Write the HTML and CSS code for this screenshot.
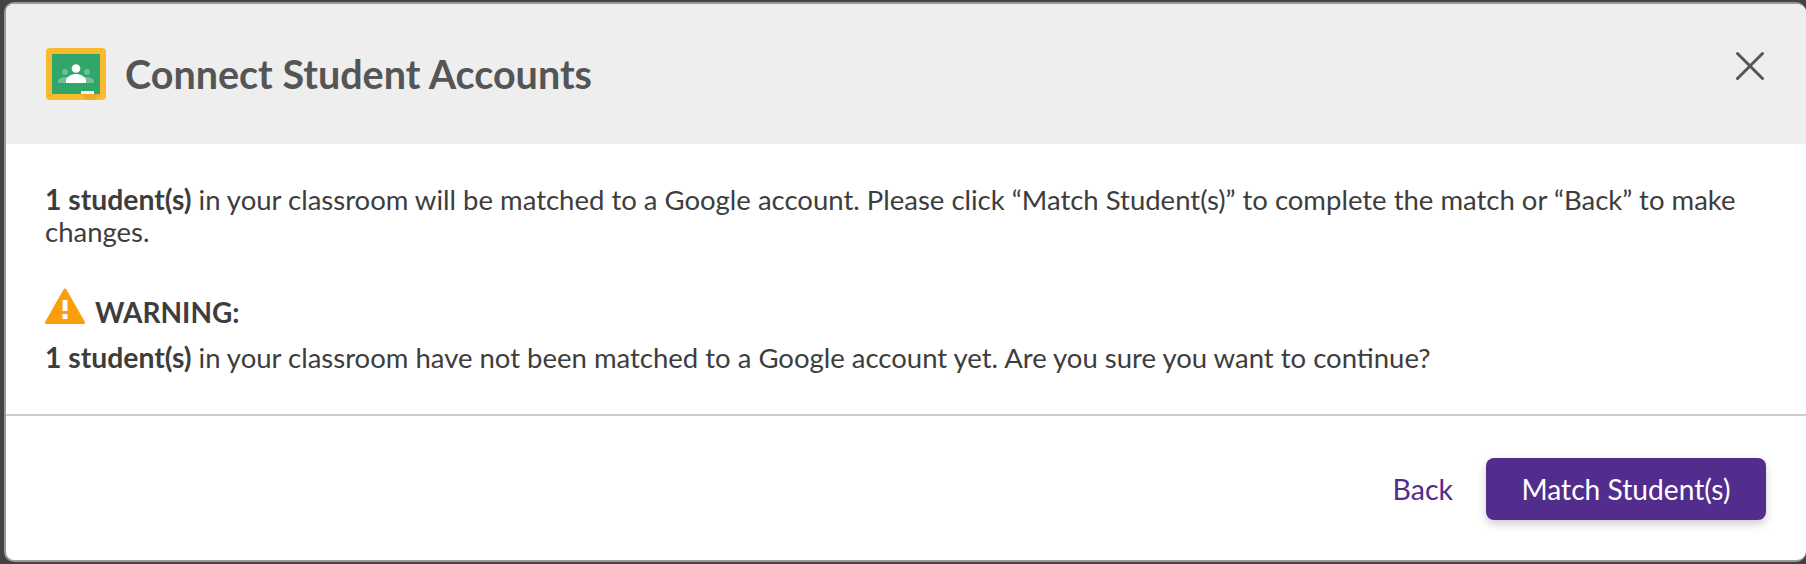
FILE: index.html
```
<!DOCTYPE html>
<html lang="en">
<head>
<meta charset="utf-8">
<title>Connect Student Accounts</title>
<link rel="stylesheet" href="styles.css">
</head>
<body>
<div class="modal">
  <header class="modal-header">
    <div class="title-group">
      <svg class="classroom-logo" width="60" height="52" viewBox="0 0 60 52">
        <rect width="60" height="52" rx="4" fill="#f8bb2e"/>
        <rect x="6" y="6" width="48" height="40" fill="#30a66a"/>
        <path d="M35 46h19v1l-6 5H41z" fill="#eeaa2c"/>
        <rect x="35" y="43" width="13" height="3" fill="#f3f3f3"/>
        <circle cx="19" cy="24" r="3" fill="#72bf95"/>
        <circle cx="41" cy="24" r="3" fill="#72bf95"/>
        <path d="M12 35v-1.500c0-2.500 4-4.500 7-4.500s7 2 7 6zM34 35c0-4 4-6 7-6s7 2 7 4.500V35z" fill="#72bf95"/>
        <circle cx="30" cy="20.500" r="4.300" fill="#fff"/>
        <path d="M20 35v-2.500c0-4 6-6.500 10-6.500s10 2.500 10 6.500V35z" fill="#fff"/>
      </svg>
      <h1 class="modal-title">Connect Student Accounts</h1>
    </div>
    <button class="close-btn" aria-label="Close">
      <svg width="30" height="30" viewBox="0 0 30 30"><path d="M2.500 2.500l25 25M27.500 2.500l-25 25" stroke="#555" stroke-width="3" stroke-linecap="round" fill="none"/></svg>
    </button>
  </header>
  <section class="modal-body">
    <p class="intro"><strong>1 student(s)</strong> in your classroom will be matched to a Google account. Please click “Match Student(s)” to complete the match or “Back” to make changes.</p>
    <div class="warning-head">
      <svg class="warning-icon" width="40" height="37" viewBox="0 0 40 37">
        <path d="M20 2L38.500 34.500H1.500z" fill="#fb9e0c" stroke="#fb9e0c" stroke-width="3" stroke-linejoin="round"/>
        <rect x="17.500" y="12" width="5" height="11" fill="#fff"/>
        <rect x="17.500" y="26" width="5" height="5" fill="#fff"/>
      </svg>
      <span class="warning-label">WARNING:</span>
    </div>
    <p class="warning-text"><strong>1 student(s)</strong> in your classroom have not been matched to a Google account yet. Are you sure you want to continue?</p>
  </section>
  <footer class="modal-footer">
    <a class="back-link" href="#">Back</a>
    <button class="match-btn">Match Student(s)</button>
  </footer>
</div>
</body>
</html>
```

FILE: styles.css
```
* { box-sizing: border-box; }
html, body { height: 100%; }
body {
  margin: 0;
  padding: 2px 0 2px 4px;
  background: #434343;
  font-family: Lato, sans-serif;
  color: #3d3d3d;
  overflow: hidden;
}
.modal {
  height: 560px;
  display: flex;
  flex-direction: column;
  background: #fff;
  border: 2px solid #999;
  border-right: 0;
  border-radius: 10px;
  overflow: hidden;
}
.modal-header {
  height: 140px;
  flex: none;
  display: flex;
  align-items: flex-start;
  justify-content: space-between;
  padding: 44px 41px 0 40px;
  background: #eee;
}
.title-group { display: flex; align-items: center; gap: 19px; }
.classroom-logo { display: block; }
.modal-title {
  margin: -1px 0 0;
  font-size: 39.5px;
  line-height: 44px;
  font-weight: 700;
  color: #555;
}
.close-btn {
  padding: 0;
  border: 0;
  background: none;
  display: flex;
  margin-top: 3px;
}
.modal-body {
  flex: 1;
  padding: 39px 40px 0 39px;
  border-bottom: 2px solid #ccc;
  font-size: 27.5px;
  line-height: 32px;
}
.modal-body p { margin: 0; }
.modal-body strong { font-weight: 700; font-size: 28.3px; }
.warning-head {
  margin-top: 40px;
  height: 37px;
  display: flex;
  align-items: flex-end;
  gap: 10px;
}
.warning-label {
  margin-bottom: -4px;
  font-size: 28px;
  line-height: 33px;
  font-weight: 700;
}
.warning-text { margin-top: 16px !important; }
.modal-footer {
  height: 144px;
  flex: none;
  display: flex;
  align-items: center;
  justify-content: flex-end;
  gap: 33px;
  padding: 2px 40px 0 0;
}
.back-link {
  color: #532d8e;
  font-size: 28.5px;
  text-decoration: none;
}
.match-btn {
  width: 280px;
  height: 62px;
  border: 0;
  border-radius: 8px;
  background: #532d8e;
  color: #fff;
  font-family: Lato, sans-serif;
  font-size: 28.2px;
  box-shadow: 0 4px 10px rgba(0,0,0,.2);
}
```
